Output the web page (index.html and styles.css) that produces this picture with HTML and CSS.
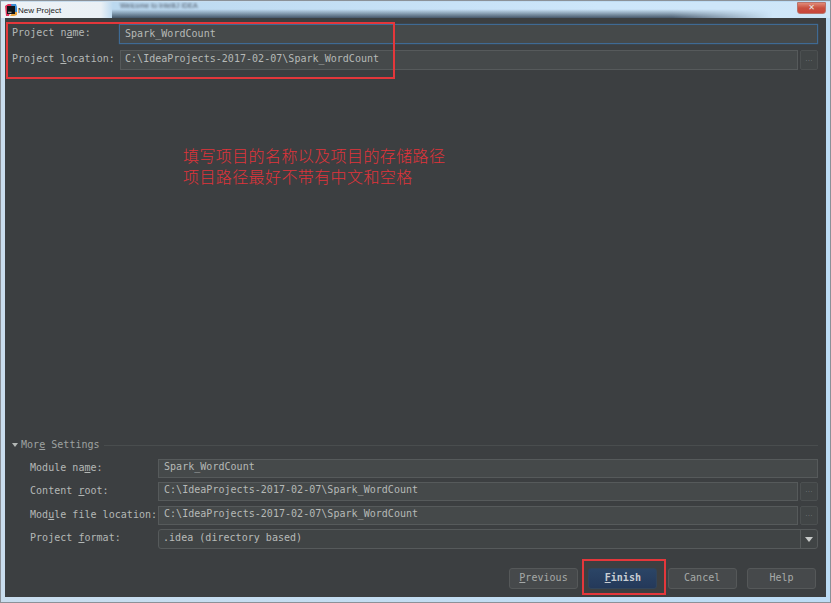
FILE: index.html
```html
<!DOCTYPE html>
<html lang="zh">
<head>
<meta charset="utf-8">
<title>New Project</title>
<link rel="stylesheet" href="styles.css">
</head>
<body>
<div class="window">
  <header class="titlebar">
    <svg class="app-icon" width="12" height="12" viewBox="0 0 12 12">
      <path d="M0 2l3-2h5L6 6l-2 6H1z" fill="#e0335b"/>
      <path d="M6 0h5l1 3v5H8z" fill="#3a8fd8"/>
      <path d="M8 8h4v3l-3 1H5z" fill="#e8a23a"/>
      <path d="M2 2h8v8H2z" fill="#101418"/>
      <path d="M3 7.800h3.500v.8H3z" fill="#eee"/>
    </svg>
    <span class="title-text">New Project</span>
    <div class="behind-window"><span class="behind-text">Welcome to IntelliJ IDEA</span></div>
    <div class="close-btn"><span class="close-x">✕</span></div>
  </header>
  <main class="dialog">
    <section class="top-form">
      <div class="row">
        <label class="label label-name">Project n<u>a</u>me:</label>
        <div class="field focused">Spark_WordCount</div>
      </div>
      <div class="row">
        <label class="label label-location">Project <u>l</u>ocation:</label>
        <div class="field field-location">C:\IdeaProjects-2017-02-07\Spark_WordCount</div>
        <div class="browse">...</div>
      </div>
    </section>
    <div class="note">
      <p>填写项目的名称以及项目的存储路径</p>
      <p>项目路径最好不带有中文和空格</p>
    </div>
    <section class="more">
      <div class="more-head">
        <span class="tri"></span>
        <span class="more-title">Mor<u>e</u> Settings</span>
        <span class="rule"></span>
      </div>
      <div class="more-form">
        <div class="row">
          <label class="label">Module na<u>m</u>e:</label>
          <div class="field">Spark_WordCount</div>
        </div>
        <div class="row">
          <label class="label">Content <u>r</u>oot:</label>
          <div class="field">C:\IdeaProjects-2017-02-07\Spark_WordCount</div>
          <div class="browse">...</div>
        </div>
        <div class="row">
          <label class="label">Mod<u>u</u>le file location:</label>
          <div class="field">C:\IdeaProjects-2017-02-07\Spark_WordCount</div>
          <div class="browse">...</div>
        </div>
        <div class="row">
          <label class="label">Project <u>f</u>ormat:</label>
          <div class="field combo">
            <span class="combo-text">.idea (directory based)</span>
            <span class="combo-arrow"><span class="arrow"></span></span>
          </div>
        </div>
      </div>
    </section>
    <footer class="buttons">
      <div class="btn"><span><u>P</u>revious</span></div>
      <div class="btn primary"><span><u>F</u>inish</span></div>
      <div class="btn">Cancel</div>
      <div class="btn">Help</div>
    </footer>
    <div class="mark mark-top"></div>
    <div class="mark mark-finish"></div>
  </main>
</div>
</body>
</html>
```

FILE: styles.css
```css
* { box-sizing: border-box; }
html, body { margin: 0; padding: 0; }
body {
  width: 831px;
  height: 603px;
  overflow: hidden;
  background: #dfe6ec;
  font-family: "DejaVu Sans Mono", monospace;
  font-size: 10px;
  letter-spacing: 0.03px;
  color: #b4b8b6;
}
u { text-underline-offset: 1px; }
.window {
  width: 831px;
  height: 603px;
  padding: 1px 3px 5px 3px;
  display: flex;
  flex-direction: column;
  background: linear-gradient(90deg, #c9ddee, #bcdcf5);
  border: 1px solid #8b9198;
  position: relative;
}
.titlebar {
  height: 16px;
  flex: none;
  display: flex;
  align-items: center;
  position: relative;
  margin: 0 -3px;
  padding-left: 4px;
  background: linear-gradient(90deg, #eef2f6 0, #eaf0f5 100px, #bcd9f0 112px, #cde6fa 600px, #cfe6f8 100%);
}
.app-icon { flex: none; }
.title-text {
  margin-left: 1px;
  font-family: "Liberation Sans", sans-serif;
  font-size: 8px;
  letter-spacing: 0;
  color: #222;
  position: relative;
}
.behind-window {
  position: absolute;
  left: 111px;
  right: 0;
  top: 0;
  bottom: 0;
  background: linear-gradient(180deg, rgba(120,150,175,0) 45%, rgba(55,72,90,.9) 100%);
  -webkit-mask-image: linear-gradient(90deg, #000 78%, rgba(0,0,0,0) 92%);
}
.behind-text {
  display: block;
  margin: 1px 0 0 8px;
  width: 92px;
  height: 6px;
  overflow: hidden;
  font-family: "Liberation Sans", sans-serif;
  font-size: 7px;
  line-height: 6px;
  color: #4a5564;
  filter: blur(1.200px);
}
.close-btn {
  position: absolute;
  right: 4px;
  top: 0;
  width: 29px;
  height: 12px;
  background: linear-gradient(180deg, #e08a78 0, #c9503f 50%, #c8453a 100%);
  border: 1px solid #b9736a;
  border-radius: 0 0 3px 3px;
  display: flex;
  align-items: center;
  justify-content: center;
}
.close-x {
  font-family: "DejaVu Sans", sans-serif;
  font-size: 8px;
  line-height: 8px;
  font-weight: bold;
  color: #e6e6e6;
}
.dialog {
  flex: 1;
  min-height: 0;
  margin: 0 1px;
  position: relative;
  display: flex;
  flex-direction: column;
  background: #3c3f41;
  padding: 6px 8px 8px 7px;
}
.row { display: flex; align-items: stretch; }
.top-form { display: flex; flex-direction: column; gap: 6px; flex: none; }
.label {
  flex: none;
  display: block;
  white-space: pre;
  line-height: 18px;
}
.label-name { width: 107px; }
.label-location { width: 108px; line-height: 17px; }
.more-form .label { width: 128px; line-height: 18px; }
.field {
  flex: 1;
  min-width: 0;
  height: 20px;
  line-height: 17px;
  padding-left: 5px;
  background: #45494a;
  border: 1px solid #565a5b;
  color: #b6b9b7;
  white-space: pre;
}
.field.focused {
  border-color: #3f6a94;
  box-shadow: 0 0 1px #3f6a94;
}
.field-location { padding-left: 4px; line-height: 16px; }
.browse {
  flex: none;
  width: 18px;
  margin-left: 2px;
  background: #414546;
  border: 1px solid #4c5051;
  border-radius: 2px;
  text-align: center;
  line-height: 17px;
  font-size: 4px;
  color: #b0b3b2;
}
.note {
  flex: 1;
  padding: 75px 0 0 171px;
  font-family: "Noto Sans CJK SC", sans-serif;
  font-size: 16px;
  letter-spacing: 0.4px;
  color: #e0333a;
  line-height: 21px;
}
.note p { margin: 0; height: 21px; font-weight: 300; }
.more { flex: none; }
.more-head {
  display: flex;
  align-items: center;
  height: 10px;
}
.tri {
  width: 0;
  height: 0;
  border-left: 3px solid transparent;
  border-right: 3px solid transparent;
  border-top: 4px solid #b4b8b6;
  margin: 1px 3px 0 0;
}
.more-title { color: #9ea2a0; white-space: pre; }
.rule { flex: 1; height: 1px; background: #494d4e; margin: 2px 0 0 4px; }
.more-form {
  display: flex;
  flex-direction: column;
  gap: 4.500px;
  padding: 9px 0 0 18px;
}
.more-form .field { height: 19px; line-height: 14px; }
.more-form .browse { line-height: 16px; }
.more-form .combo {
  display: flex;
  padding-left: 4px;
  height: 20px;
  border-radius: 3px;
  background: #404445;
  line-height: 16px;
}
.combo-text { flex: 1; color: #b8bbb9; }
.combo-arrow {
  flex: none;
  width: 17px;
  border-left: 1px solid #565a5b;
  display: flex;
  align-items: center;
  justify-content: center;
}
.arrow {
  width: 0;
  height: 0;
  border-left: 4px solid transparent;
  border-right: 4px solid transparent;
  border-top: 5px solid #c8cbca;
}
.buttons {
  flex: none;
  display: flex;
  justify-content: flex-end;
  gap: 10.330px;
  margin-top: 19px;
  padding-right: 2px;
}
.btn {
  width: 69px;
  height: 21px;
  line-height: 17px;
  text-align: center;
  background: #46494b;
  border: 1px solid #555859;
  border-radius: 3px;
  color: #a6a9a8;
  white-space: pre;
}
.btn.primary {
  background: linear-gradient(180deg, #2b4566, #24395a);
  border-color: #31445a;
  color: #c9ced4;
  font-weight: bold;
}
.mark {
  position: absolute;
  border: 2px solid #e4373b;
  pointer-events: none;
}
.mark-top { left: 1px; top: 4px; width: 389px; height: 57px; }
.mark-finish { left: 577px; top: 541px; width: 84px; height: 36px; }
```
